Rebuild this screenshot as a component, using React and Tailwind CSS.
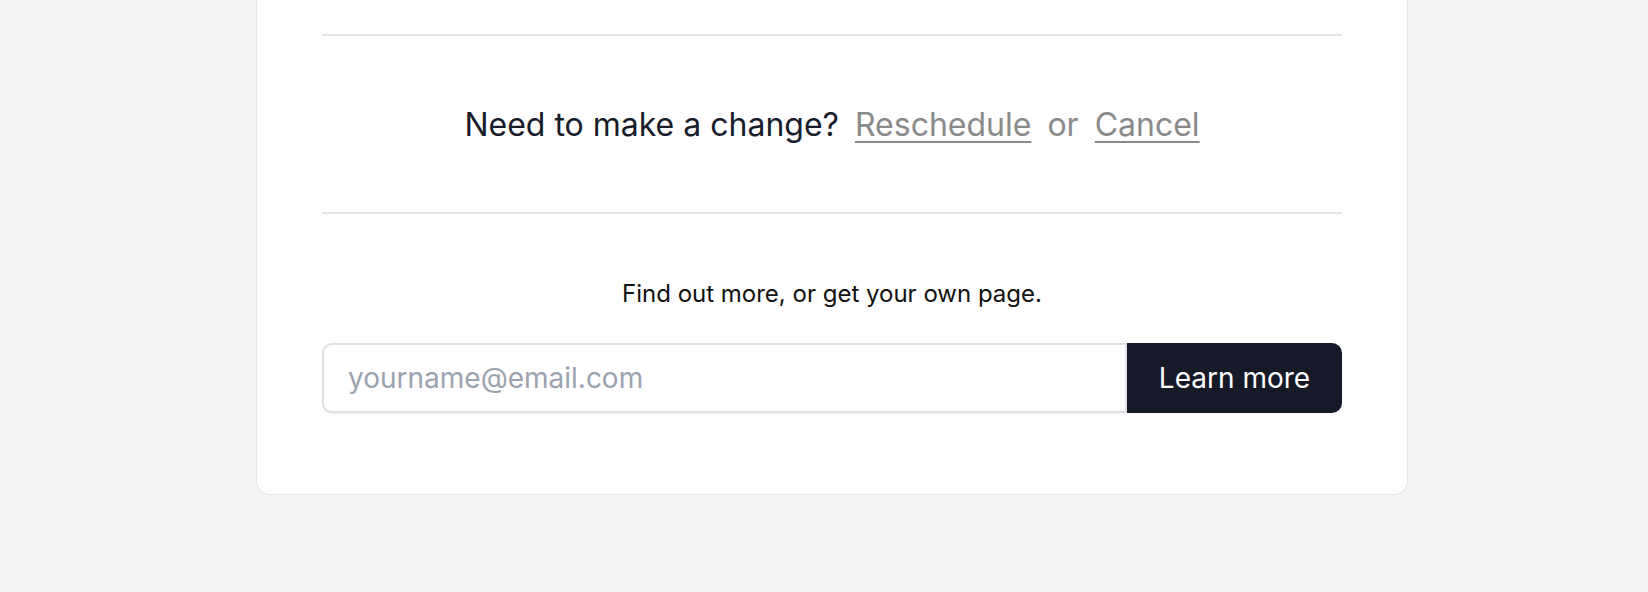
export default function App() {
  return (
    <div className="min-h-[592px] bg-[#f3f4f6] font-['Inter','Noto_Sans',sans-serif]">
      <div className="ml-[256px] w-[1152px] bg-white border border-t-0 border-[#e5e7eb] rounded-b-[14px] px-[65px] pt-[34px] pb-[81px]">
        <div className="h-[2px] bg-[#e3e4e8]" />
        <div className="pt-[71px] pb-[69px] flex items-baseline justify-center gap-[16px] text-[32px] leading-[36px] text-[#181c2b]">
          <span>Need to make a change?</span>
          <a href="#" className="text-[#8a8a8a] underline decoration-[2px] underline-offset-[5px]">Reschedule</a>
          <span className="text-[#8a8a8a]">or</span>
          <a href="#" className="text-[#8a8a8a] underline decoration-[2px] underline-offset-[5px]">Cancel</a>
        </div>
        <div className="h-[2px] bg-[#e3e4e8]" />
        <p className="mt-[64px] text-center text-[24px] leading-[32px] text-[#111111]">Find out more, or get your own page.</p>
        <div className="mt-[33px] flex h-[70px]">
          <input
            type="text"
            placeholder="yourname@email.com"
            className="flex-1 min-w-0 h-full rounded-l-[10px] border-2 border-[#e0e1e4] shadow-[0_1px_2px_rgba(0,0,0,0.08)] px-6 text-[28px] text-[#181c2b] placeholder:text-[#9ca3af] outline-none bg-white"
          />
          <button className="w-[215px] h-full rounded-r-[10px] bg-[#161a28] text-white text-[28px]">Learn more</button>
        </div>
      </div>
    </div>
  );
}
